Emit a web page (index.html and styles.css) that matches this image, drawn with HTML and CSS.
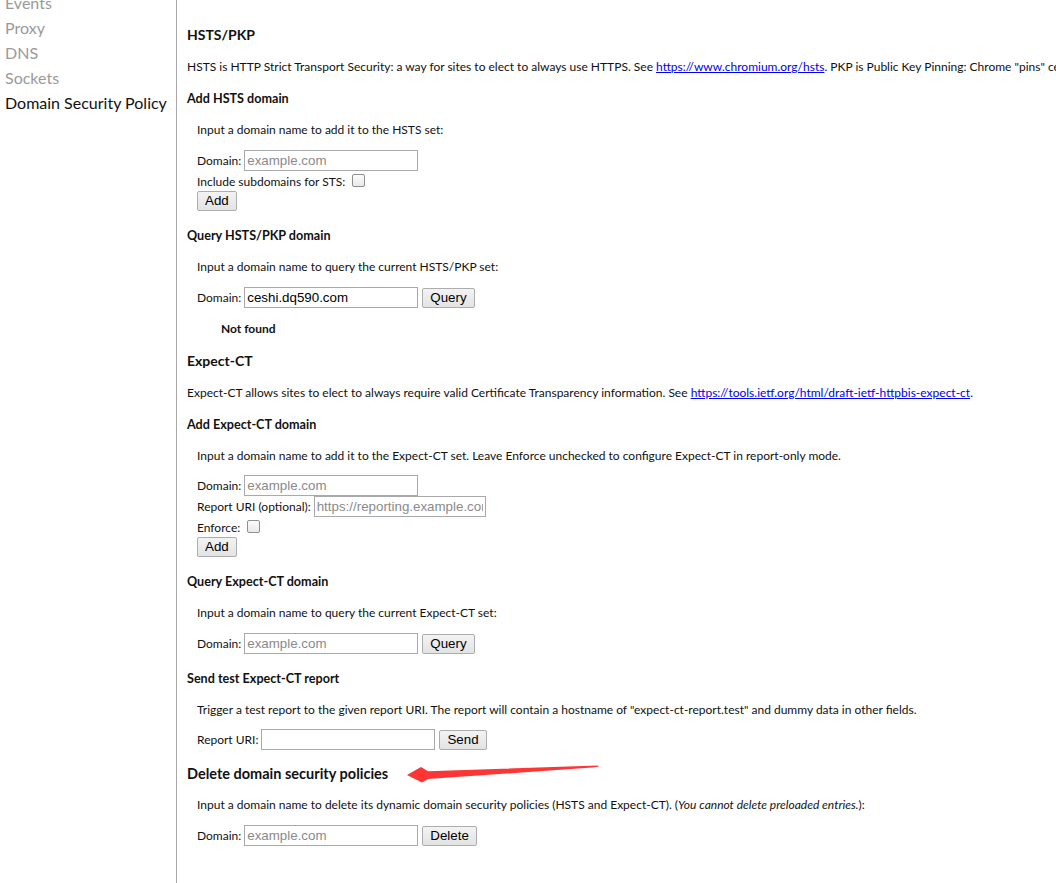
FILE: index.html
```html
<!DOCTYPE html>
<html lang="en">
<head>
<meta charset="utf-8">
<title>net-internals: Domain Security Policy</title>
<link rel="stylesheet" href="styles.css">
</head>
<body>
<div class="page">
  <nav class="sidebar">
    <ul class="tabs">
      <li class="tab">Events</li>
      <li class="tab">Proxy</li>
      <li class="tab">DNS</li>
      <li class="tab">Sockets</li>
      <li class="tab active">Domain Security Policy</li>
    </ul>
  </nav>
  <main class="content">
    <h2 class="sec-title">HSTS/PKP</h2>
    <p class="desc">HSTS is HTTP Strict Transport Security: a way for sites to elect to always use HTTPS. See <a class="link" href="#">https://www.chromium.org/hsts</a>. PKP is Public Key Pinning: Chrome "pins" certain sites' keys to prevent man-in-the-middle attacks that use mis-issued certificates.</p>

    <h4 class="sub-title first">Add HSTS domain</h4>
    <div class="block">
      <p class="hint">Input a domain name to add it to the HSTS set:</p>
      <div class="form">
        <div class="row"><span class="lbl">Domain:</span><input class="field" type="text" placeholder="example.com"></div>
        <div class="row check-row"><span class="lbl">Include subdomains for STS:</span><input class="box" type="checkbox"></div>
        <div class="row btn-row"><button class="btn">Add</button></div>
      </div>
    </div>

    <h4 class="sub-title">Query HSTS/PKP domain</h4>
    <div class="block">
      <p class="hint">Input a domain name to query the current HSTS/PKP set:</p>
      <div class="form">
        <div class="row"><span class="lbl">Domain:</span><input class="field" type="text" value="ceshi.dq590.com"><button class="btn">Query</button></div>
      </div>
      <div class="result">Not found</div>
    </div>

    <h2 class="sec-title next">Expect-CT</h2>
    <p class="desc">Expect-CT allows sites to elect to always require valid Certificate Transparency information. See <a class="link" href="#">https://tools.ietf.org/html/draft-ietf-httpbis-expect-ct</a>.</p>

    <h4 class="sub-title first">Add Expect-CT domain</h4>
    <div class="block">
      <p class="hint">Input a domain name to add it to the Expect-CT set. Leave Enforce unchecked to configure Expect-CT in report-only mode.</p>
      <div class="form tight">
        <div class="row"><span class="lbl">Domain:</span><input class="field" type="text" placeholder="example.com"></div>
        <div class="row"><span class="lbl">Report URI (optional):</span><input class="field narrow" type="text" placeholder="https://reporting.example.com"></div>
        <div class="row check-row"><span class="lbl">Enforce:</span><input class="box" type="checkbox"></div>
        <div class="row btn-row"><button class="btn">Add</button></div>
      </div>
    </div>

    <h4 class="sub-title">Query Expect-CT domain</h4>
    <div class="block">
      <p class="hint">Input a domain name to query the current Expect-CT set:</p>
      <div class="form">
        <div class="row"><span class="lbl">Domain:</span><input class="field" type="text" placeholder="example.com"><button class="btn">Query</button></div>
      </div>
    </div>

    <h4 class="sub-title">Send test Expect-CT report</h4>
    <div class="block">
      <p class="hint">Trigger a test report to the given report URI. The report will contain a hostname of "expect-ct-report.test" and dummy data in other fields.</p>
      <div class="form tight">
        <div class="row"><span class="lbl">Report URI:</span><input class="field" type="text"><button class="btn">Send</button></div>
      </div>
    </div>

    <h3 class="del-title">Delete domain security policies<svg class="arrow" width="196" height="22" viewBox="0 0 196 22"><polygon points="2,12 16,4 23,8.2 193,2.4 194,3.6 187,4.6 23,16 17,19.6" fill="#fd3535"/></svg></h3>
    <div class="block">
      <p class="hint del-hint">Input a domain name to delete its dynamic domain security policies (HSTS and Expect-CT). (<em>You cannot delete preloaded entries.</em>):</p>
      <div class="form">
        <div class="row"><span class="lbl">Domain:</span><input class="field" type="text" placeholder="example.com"><button class="btn">Delete</button></div>
      </div>
    </div>
  </main>
</div>
</body>
</html>
```

FILE: styles.css
```css
html, body {
  margin: 0;
  padding: 0;
  background: #fff;
  overflow: hidden;
}

body {
  font-family: Lato, "Liberation Sans", sans-serif;
  font-size: 12px;
  color: #111;
}

.page {
  display: flex;
  min-height: 883px;
}

.sidebar {
  flex: none;
  width: 177px;
  box-sizing: border-box;
  border-right: 1px solid #a8a8a8;
}

.tabs {
  list-style: none;
  margin: -10px 0 0;
  padding: 0 0 0 5px;
  font-size: 16px;
  line-height: 25px;
  color: #9a9a9a;
  white-space: nowrap;
}

.tab.active {
  color: #111;
}

.content {
  flex: 1;
  min-width: 0;
  padding: 25px 0 0 10px;
  white-space: nowrap;
}

.sec-title {
  margin: 0;
  font-size: 14px;
  font-weight: bold;
  line-height: 20px;
}

.sec-title.next {
  margin-top: 14px;
}

.desc {
  margin: 14px 0 0;
  line-height: 16px;
}

.link {
  color: #0000ee;
  text-decoration: underline;
}

.sub-title {
  margin: 17px 0 0;
  font-size: 12.6px;
  font-weight: bold;
  line-height: 16px;
}

.sub-title.first {
  margin-top: 16px;
}

.block {
  padding-left: 10px;
}

.hint {
  margin: 15px 0 0;
  line-height: 16px;
}

.form {
  margin-top: 12px;
}

.form.tight {
  margin-top: 11px;
}

.row {
  display: flex;
  align-items: center;
  height: 21px;
}

.check-row {
  height: 20px;
}

.btn-row {
  height: 20px;
}

.lbl {
  margin-right: 3px;
}

.field {
  box-sizing: border-box;
  width: 174px;
  height: 21px;
  margin: 0;
  padding: 1px 2px;
  border: 1px solid #a9a9a9;
  border-radius: 0;
  font-family: "Liberation Sans", Arial, sans-serif;
  font-size: 13.33px;
  color: #000;
  background: #fff;
  outline: none;
}

.field.narrow {
  width: 172px;
}

.field::placeholder {
  color: #8a8a8a;
}

.box {
  appearance: none;
  -webkit-appearance: none;
  box-sizing: border-box;
  width: 13px;
  height: 13px;
  margin: 0 0 2px 4px;
  border: 1px solid #8f8f8f;
  border-radius: 2px;
  background: linear-gradient(#fcfcfc, #e8e8e8);
}

.btn {
  box-sizing: border-box;
  height: 20px;
  margin: 0 0 0 4px;
  padding: 0 7px;
  border: 1px solid #adadad;
  border-radius: 2px;
  background: linear-gradient(#f3f3f3, #e3e3e3);
  font-family: "Liberation Sans", Arial, sans-serif;
  font-size: 13.33px;
  color: #000;
  line-height: 18px;
}

.btn-row .btn {
  margin-left: 0;
}

.result {
  margin: 13px 0 0 24px;
  font-weight: bold;
  line-height: 16px;
}

.del-title {
  position: relative;
  margin: 15px 0 0;
  font-size: 14.5px;
  font-weight: bold;
  line-height: 18px;
}

.arrow {
  position: absolute;
  left: 218px;
  top: -2px;
}

.del-hint {
  margin-top: 14px;
}
```
